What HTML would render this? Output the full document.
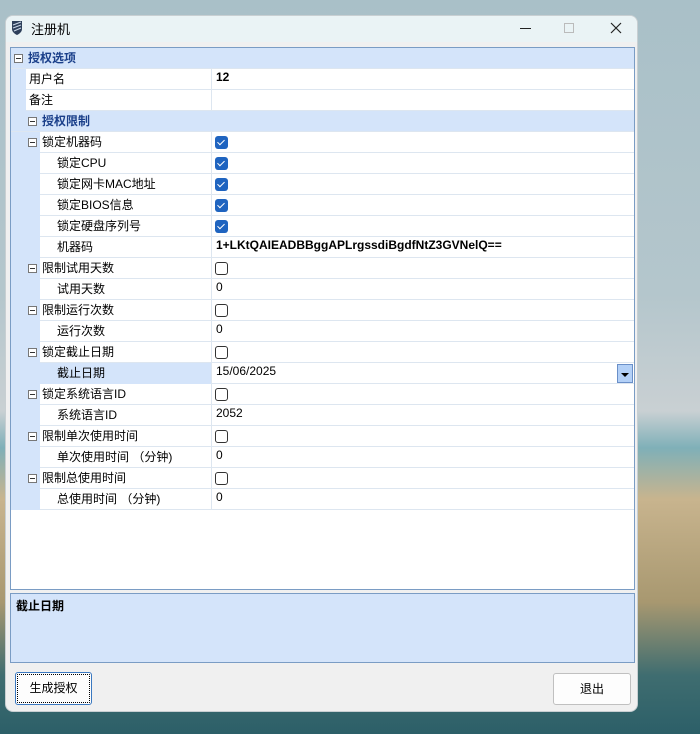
<!DOCTYPE html>
<html><head><meta charset="utf-8"><style>
*{margin:0;padding:0;box-sizing:border-box}
body{width:700px;height:734px;position:relative;overflow:hidden;font-family:"Liberation Sans","Noto Sans CJK SC",sans-serif;font-size:12px;color:#000;
background:linear-gradient(180deg,#a9c0c8 0%,#b4c6cc 40%,#c9d0d3 56%,#7fb0b8 61%,#c8b48e 68%,#a89870 82%,#3f6d70 92%,#2c5f68 100%)}
.win{position:absolute;left:5px;top:15px;width:633px;height:697px;background:#f0f0f0;border-radius:8px;border:1px solid #c8cfd2;overflow:hidden}
.tb{position:absolute;left:0;top:0;width:100%;height:26px;background:#eaf3f5}
.tb .t{position:absolute;left:25px;top:3px;font-size:13px}
.grid{position:absolute;left:10px;top:47px;width:625px;height:543px;background:#fff;border:1px solid #7a9cc4}
.r{position:absolute;left:0;width:623px;height:21px;border-bottom:1px solid #dde6f0}
.m{position:absolute;left:0;top:0;height:21px;background:#d4e4fa}
.c{background:#d4e4fa}
.l{position:absolute;top:1px}
.v{position:absolute;left:205px;top:1px}
.sp{position:absolute;left:200px;top:0;width:1px;height:21px;background:#dde6f0}
.ex{position:absolute;top:6px;width:9px;height:9px;border:1px solid #777;background:#fff}
.ex:after{content:"";position:absolute;left:1px;top:3px;width:5px;height:1px;background:#333}
.cb{position:absolute;left:204px;top:4px;width:13px;height:13px;border-radius:3px;background:#1f64c0}
.cb:after{content:"";position:absolute;left:4px;top:2px;width:3px;height:6px;border:solid #fff;border-width:0 1.5px 1.5px 0;transform:rotate(45deg)}
.cu{position:absolute;left:204px;top:4px;width:13px;height:13px;border-radius:3px;border:1px solid #333;background:#fff}
.desc{position:absolute;left:10px;top:593px;width:625px;height:70px;background:#d4e4fa;border:1px solid #7a9cc4}
.btn{position:absolute;background:#fdfdfd;border:1px solid #c0c0c0;border-radius:3px;text-align:center;line-height:31px;font-size:12px}
</style></head><body>
<div class="win">
<div class="tb"><svg style="position:absolute;left:5px;top:4px" width="12" height="15" viewBox="0 0 12 15"><path d="M1 1h10v8c0 3-3 5-5 6-2-1-5-3-5-6z" fill="#2d3f5a"/><path d="M2 5l8-3M2 8l8-3M3 11l7-3" stroke="#c9d6e6" stroke-width="1.2"/></svg><span class="t">注册机</span>
<div style="position:absolute;left:514px;top:12px;width:11px;height:1px;background:#222"></div>
<div style="position:absolute;left:558px;top:7px;width:10px;height:10px;border:1px solid #bbb"></div>
<svg style="position:absolute;left:604px;top:6px" width="12" height="12"><path d="M1 1L11 11M11 1L1 11" stroke="#222" stroke-width="1.2"/></svg>
</div>
</div>
<div class="grid">
<div class="r c" style="top:0"><div class="ex" style="left:3px"></div><span class="l" style="left:17px;color:#1a3f8a;font-weight:bold">授权选项</span></div>
<div class="r" style="top:21px"><div class="m" style="width:15px"></div><span class="l" style="left:18px">用户名</span><div class="sp"></div><b class="v">12</b></div>
<div class="r" style="top:42px"><div class="m" style="width:15px"></div><span class="l" style="left:18px">备注</span><div class="sp"></div></div>
<div class="r c" style="top:63px"><div class="ex" style="left:17px"></div><span class="l" style="left:31px;color:#1a3f8a;font-weight:bold">授权限制</span></div>
<div class="r" style="top:84px"><div class="m" style="width:29px"></div><div class="ex" style="left:17px"></div><span class="l" style="left:31px">锁定机器码</span><div class="sp"></div><div class="cb"></div></div>
<div class="r" style="top:105px"><div class="m" style="width:29px"></div><span class="l" style="left:46px">锁定CPU</span><div class="sp"></div><div class="cb"></div></div>
<div class="r" style="top:126px"><div class="m" style="width:29px"></div><span class="l" style="left:46px">锁定网卡MAC地址</span><div class="sp"></div><div class="cb"></div></div>
<div class="r" style="top:147px"><div class="m" style="width:29px"></div><span class="l" style="left:46px">锁定BIOS信息</span><div class="sp"></div><div class="cb"></div></div>
<div class="r" style="top:168px"><div class="m" style="width:29px"></div><span class="l" style="left:46px">锁定硬盘序列号</span><div class="sp"></div><div class="cb"></div></div>
<div class="r" style="top:189px"><div class="m" style="width:29px"></div><span class="l" style="left:46px">机器码</span><div class="sp"></div><b class="v">1+LKtQAIEADBBggAPLrgssdiBgdfNtZ3GVNelQ==</b></div>
<div class="r" style="top:210px"><div class="m" style="width:29px"></div><div class="ex" style="left:17px"></div><span class="l" style="left:31px">限制试用天数</span><div class="sp"></div><div class="cu"></div></div>
<div class="r" style="top:231px"><div class="m" style="width:29px"></div><span class="l" style="left:46px">试用天数</span><div class="sp"></div><span class="v">0</span></div>
<div class="r" style="top:252px"><div class="m" style="width:29px"></div><div class="ex" style="left:17px"></div><span class="l" style="left:31px">限制运行次数</span><div class="sp"></div><div class="cu"></div></div>
<div class="r" style="top:273px"><div class="m" style="width:29px"></div><span class="l" style="left:46px">运行次数</span><div class="sp"></div><span class="v">0</span></div>
<div class="r" style="top:294px"><div class="m" style="width:29px"></div><div class="ex" style="left:17px"></div><span class="l" style="left:31px">锁定截止日期</span><div class="sp"></div><div class="cu"></div></div>
<div class="r" style="top:315px"><div class="m" style="width:200px"></div><span class="l" style="left:46px">截止日期</span><div class="sp"></div><span class="v">15/06/2025</span><div style="position:absolute;left:606px;top:1px;width:16px;height:19px;background:#b3d0f7;border:1px solid #6a8fc8"><div style="position:absolute;left:3px;top:8px;border:4px solid transparent;border-top:4px solid #000"></div></div></div>
<div class="r" style="top:336px"><div class="m" style="width:29px"></div><div class="ex" style="left:17px"></div><span class="l" style="left:31px">锁定系统语言ID</span><div class="sp"></div><div class="cu"></div></div>
<div class="r" style="top:357px"><div class="m" style="width:29px"></div><span class="l" style="left:46px">系统语言ID</span><div class="sp"></div><span class="v">2052</span></div>
<div class="r" style="top:378px"><div class="m" style="width:29px"></div><div class="ex" style="left:17px"></div><span class="l" style="left:31px">限制单次使用时间</span><div class="sp"></div><div class="cu"></div></div>
<div class="r" style="top:399px"><div class="m" style="width:29px"></div><span class="l" style="left:46px">单次使用时间 （分钟)</span><div class="sp"></div><span class="v">0</span></div>
<div class="r" style="top:420px"><div class="m" style="width:29px"></div><div class="ex" style="left:17px"></div><span class="l" style="left:31px">限制总使用时间</span><div class="sp"></div><div class="cu"></div></div>
<div class="r" style="top:441px"><div class="m" style="width:29px"></div><span class="l" style="left:46px">总使用时间 （分钟)</span><div class="sp"></div><span class="v">0</span></div>
</div>
<div class="desc"><b style="position:absolute;left:5px;top:3px">截止日期</b></div>
<div class="btn" style="left:15px;top:672px;width:77px;height:33px;border:1px solid #3a78c0;outline:1px dotted #000;outline-offset:-3px">生成授权</div>
<div class="btn" style="left:553px;top:673px;width:78px;height:32px">退出</div>
</body></html>
